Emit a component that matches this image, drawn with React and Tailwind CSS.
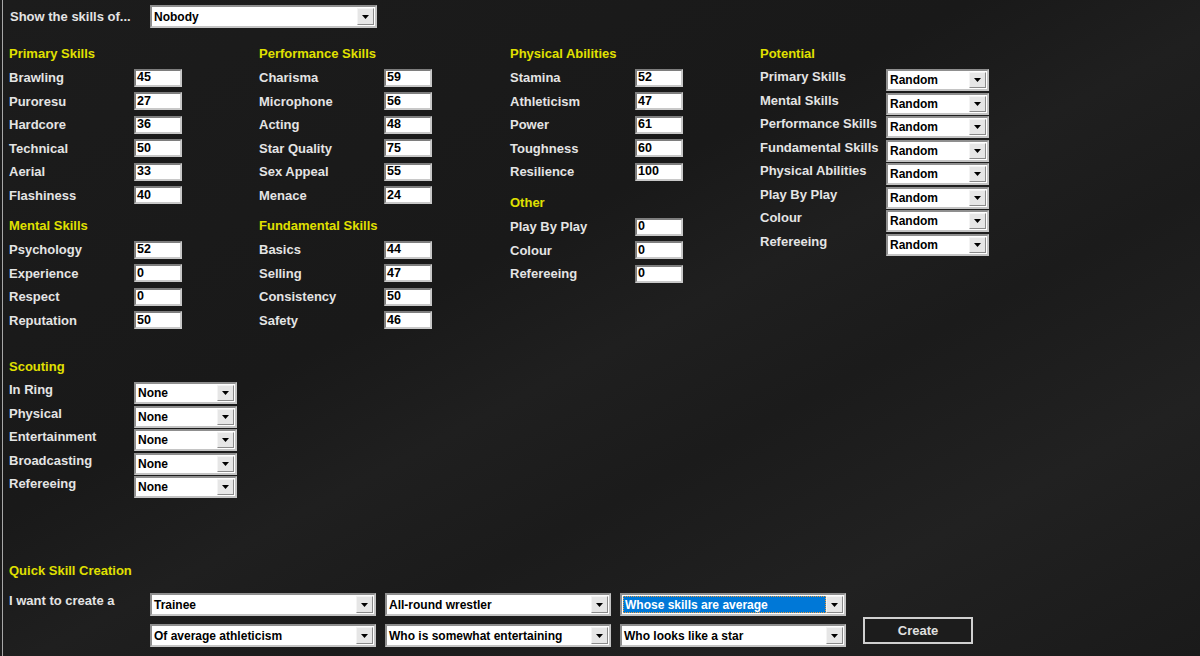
import React from 'react';

const LABEL = 'text-[13px] font-bold text-[#e4e4e4] whitespace-nowrap';
const HEAD = 'h-[24px] flex items-center text-[13px] font-bold text-[#e0e000] whitespace-nowrap';

const Arrow = () => (
  <div className="w-[17px] h-full bg-[#e6e6e6] border border-t-[#f4f4f4] border-l-[#f4f4f4] border-b-[#8a8a8a] border-r-[#8a8a8a] flex items-center justify-center shrink-0">
    <svg width="7" height="4" viewBox="0 0 7 4">
      <polygon points="0,0 7,0 3.5,4" fill="#000" />
    </svg>
  </div>
);

const Select = ({ value, size, active }) => (
  <div className={`${size} flex bg-white border-2 border-t-[#8f8f8f] border-l-[#8f8f8f] border-b-[#c4c4c4] border-r-[#c4c4c4] p-[1px] shrink-0`}>
    {active ? (
      <div className="flex-1 flex items-center bg-[#0078d7] outline-1 outline-dotted outline-[#e89a3c] -outline-offset-1 px-[2px] text-[12px] font-bold text-white whitespace-nowrap overflow-hidden">
        {value}
      </div>
    ) : (
      <div className="flex-1 flex items-center px-[1px] text-[12px] font-bold text-black whitespace-nowrap overflow-hidden">
        {value}
      </div>
    )}
    <Arrow />
  </div>
);

const NumRow = ({ label, value }) => (
  <div className="h-[23.5px] flex items-center">
    <span className={`${LABEL} w-[125px]`}>{label}</span>
    <div className="w-[48px] h-[18px] bg-white border-2 border-t-[#7e7e7e] border-l-[#7e7e7e] border-b-[#c8c8c8] border-r-[#c8c8c8] flex items-center px-[1px] text-[12.5px] font-bold text-black">
      {value}
    </div>
  </div>
);

const SelectRow = ({ label, value, labelW }) => (
  <div className="h-[23.5px] flex items-start">
    <span className={`${LABEL} ${labelW} leading-[22px]`}>{label}</span>
    <div className="mt-[3px]">
      <Select value={value} size="w-[103px] h-[22px]" />
    </div>
  </div>
);

const primary = [['Brawling', 45], ['Puroresu', 27], ['Hardcore', 36], ['Technical', 50], ['Aerial', 33], ['Flashiness', 40]];
const mental = [['Psychology', 52], ['Experience', 0], ['Respect', 0], ['Reputation', 50]];
const performance = [['Charisma', 59], ['Microphone', 56], ['Acting', 48], ['Star Quality', 75], ['Sex Appeal', 55], ['Menace', 24]];
const fundamental = [['Basics', 44], ['Selling', 47], ['Consistency', 50], ['Safety', 46]];
const physical = [['Stamina', 52], ['Athleticism', 47], ['Power', 61], ['Toughness', 60], ['Resilience', 100]];
const other = [['Play By Play', 0], ['Colour', 0], ['Refereeing', 0]];
const potential = ['Primary Skills', 'Mental Skills', 'Performance Skills', 'Fundamental Skills', 'Physical Abilities', 'Play By Play', 'Colour', 'Refereeing'];
const scouting = ['In Ring', 'Physical', 'Entertainment', 'Broadcasting', 'Refereeing'];

export default function App() {
  return (
    <div className="w-[1200px] h-[656px] overflow-hidden bg-[#1b1b1b] bg-[linear-gradient(152deg,#1c1c1c_0%,#191919_40%,#1f1f1f_52%,#1b1b1b_64%,#212121_80%,#1a1a1a_100%)] font-['Liberation_Sans',Arial,sans-serif]">
      <div className="ml-[2px] h-full border-l border-[#a8a8a8] pl-[6px]">
        {/* top selector */}
        <div className="pt-[5px] flex items-center h-[28px]">
          <span className={`${LABEL} w-[141px] pl-[1px]`}>Show the skills of...</span>
          <Select value="Nobody" size="w-[227px] h-[23px]" />
        </div>

        {/* skill columns */}
        <div className="mt-[14px] grid grid-cols-[250px_251px_250px_1fr]">
          <div className="flex flex-col">
            <div className={HEAD}>Primary Skills</div>
            {primary.map(([l, v]) => <NumRow key={l} label={l} value={v} />)}
            <div className={`${HEAD} mt-[7px]`}>Mental Skills</div>
            {mental.map(([l, v]) => <NumRow key={l} label={l} value={v} />)}
          </div>
          <div className="flex flex-col">
            <div className={HEAD}>Performance Skills</div>
            {performance.map(([l, v]) => <NumRow key={l} label={l} value={v} />)}
            <div className={`${HEAD} mt-[7px]`}>Fundamental Skills</div>
            {fundamental.map(([l, v]) => <NumRow key={l} label={l} value={v} />)}
          </div>
          <div className="flex flex-col">
            <div className={HEAD}>Physical Abilities</div>
            {physical.map(([l, v]) => <NumRow key={l} label={l} value={v} />)}
            <div className={`${HEAD} mt-[7.5px]`}>Other</div>
            {other.map(([l, v]) => <NumRow key={l} label={l} value={v} />)}
          </div>
          <div className="flex flex-col">
            <div className={HEAD}>Potential</div>
            {potential.map((l) => <SelectRow key={l} label={l} value="Random" labelW="w-[126px]" />)}
          </div>
        </div>

        {/* scouting */}
        <div className="mt-[23px] flex flex-col">
          <div className={HEAD}>Scouting</div>
          {scouting.map((l) => <SelectRow key={l} label={l} value="None" labelW="w-[125px]" />)}
        </div>

        {/* quick skill creation */}
        <div className="mt-[62.5px]">
          <div className={HEAD}>Quick Skill Creation</div>
          <div className="mt-[10px] flex items-start">
            <span className={`${LABEL} w-[141px] leading-[16px]`}>I want to create a</span>
            <div className="flex gap-[9px]">
              <Select value="Trainee" size="w-[226px] h-[23px]" />
              <Select value="All-round wrestler" size="w-[226px] h-[23px]" />
              <Select value="Whose skills are average" size="w-[226px] h-[23px]" active />
            </div>
          </div>
          <div className="mt-[8px] pl-[141px] flex items-start">
            <div className="flex gap-[9px]">
              <Select value="Of average athleticism" size="w-[226px] h-[23px]" />
              <Select value="Who is somewhat entertaining" size="w-[226px] h-[23px]" />
              <Select value="Who looks like a star" size="w-[226px] h-[23px]" />
            </div>
            <button className="ml-[17px] -mt-[7px] w-[110px] h-[27px] bg-[#1c1c1c] border-2 border-[#d0d0d0] text-[13px] font-bold text-[#e0e0e0] flex items-center justify-center">
              Create
            </button>
          </div>
        </div>
      </div>
    </div>
  );
}
